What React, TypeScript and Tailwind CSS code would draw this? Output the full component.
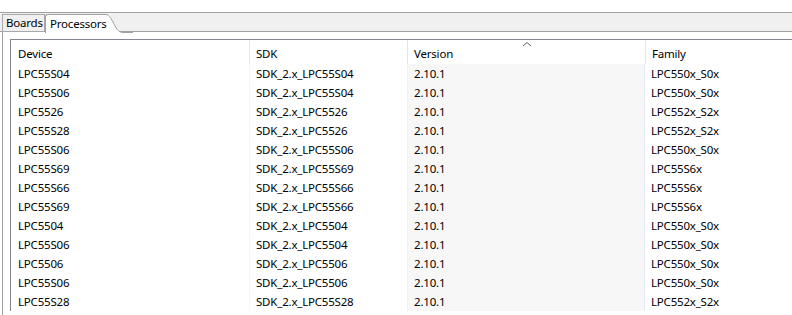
import React from 'react';

const rows = [
  ['LPC55S04', 'SDK_2.x_LPC55S04', '2.10.1', 'LPC550x_S0x'],
  ['LPC55S06', 'SDK_2.x_LPC55S04', '2.10.1', 'LPC550x_S0x'],
  ['LPC5526', 'SDK_2.x_LPC5526', '2.10.1', 'LPC552x_S2x'],
  ['LPC55S28', 'SDK_2.x_LPC5526', '2.10.1', 'LPC552x_S2x'],
  ['LPC55S06', 'SDK_2.x_LPC55S06', '2.10.1', 'LPC550x_S0x'],
  ['LPC55S69', 'SDK_2.x_LPC55S69', '2.10.1', 'LPC55S6x'],
  ['LPC55S66', 'SDK_2.x_LPC55S66', '2.10.1', 'LPC55S6x'],
  ['LPC55S69', 'SDK_2.x_LPC55S66', '2.10.1', 'LPC55S6x'],
  ['LPC5504', 'SDK_2.x_LPC5504', '2.10.1', 'LPC550x_S0x'],
  ['LPC55S06', 'SDK_2.x_LPC5504', '2.10.1', 'LPC550x_S0x'],
  ['LPC5506', 'SDK_2.x_LPC5506', '2.10.1', 'LPC550x_S0x'],
  ['LPC55S06', 'SDK_2.x_LPC5506', '2.10.1', 'LPC550x_S0x'],
  ['LPC55S28', 'SDK_2.x_LPC55S28', '2.10.1', 'LPC552x_S2x'],
];

const cols = 'grid grid-cols-[239px_157px_238px_1fr]';

export default function App() {
  return (
    <div
      className="w-[792px] h-[315px] bg-white overflow-hidden text-[11.5px] tracking-[-0.2px] text-black"
      style={{ fontFamily: '"Noto Sans", "Open Sans", sans-serif' }}
    >
      <div className="h-[12px]" />

      {/* tab strip */}
      <div className="relative h-[20px] bg-[#f0f0f0] border-y border-[#a0a0a0]">
        <div className="absolute left-[2px] top-[1px] h-[18px] flex items-end">
          <div className="h-[18px] w-[43px] pl-[3px] flex items-center border border-[#a9a9a9] bg-[#f0f0f0] leading-none">
            Boards
          </div>
          <div className="relative h-[19px] -mb-[1px] pl-[4px] flex items-center bg-white border-l border-t border-[#a0a0a0] rounded-tl-[3px] leading-none">
            <span className="relative z-10">Processors</span>
            <svg
              className="absolute left-[calc(100%-4px)] top-[-1px]"
              width="30"
              height="20"
              viewBox="0 0 30 20"
            >
              <path d="M0 0.5 L2 0.5 C6 0.5 7 3 10 8 C13 14 15 18.5 20 18.5 L30 18.5 L30 20 L0 20 Z" fill="#fff" />
              <path d="M0 0.5 L2 0.5 C6 0.5 7 3 10 8 C13 14 15 18.5 20 18.5 L30 18.5" fill="none" stroke="#a0a0a0" strokeWidth="1" />
            </svg>
          </div>
        </div>
      </div>

      {/* content */}
      <div className="ml-[2px] h-full border-l border-[#a0a0a0] pt-[7px] pl-[7px]">
        <div className="border-t border-l border-[#828790]">
          <div className={`${cols} h-[24px] relative`}>
            <div className="pl-[7px] pt-[3px] h-full flex items-center border-r border-[#e5e5e5]">Device</div>
            <div className="pl-[6px] pt-[3px] h-full flex items-center">SDK</div>
            <div className="relative pl-[6px] pt-[3px] h-full flex items-center border-l border-[#e5e5e5]">
              Version
              <svg className="absolute left-[114px] top-[1px]" width="10" height="6" viewBox="0 0 10 6">
                <polyline points="1,5 5,1.5 9,5" fill="none" stroke="#606060" strokeWidth="1" />
              </svg>
            </div>
            <div className="pl-[6px] pt-[3px] h-full flex items-center border-l border-[#e5e5e5]">Family</div>
          </div>
          {rows.map((r, i) => (
            <div key={i} className={`${cols} h-[19px] items-center`}>
              <div className="pl-[7px] h-full flex items-center border-r border-[#f5f7fb]">{r[0]}</div>
              <div className="pl-[6px] h-full flex items-center">{r[1]}</div>
              <div className="pl-[6px] h-full flex items-center bg-[#f7f7f7] border-l border-[#f0f0f0] border-r border-r-[#e3e9f5]">
                {r[2]}
              </div>
              <div className="pl-[6px] h-full flex items-center">{r[3]}</div>
            </div>
          ))}
        </div>
      </div>
    </div>
  );
}
